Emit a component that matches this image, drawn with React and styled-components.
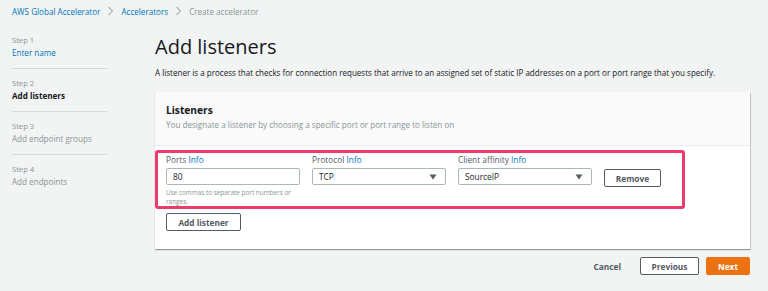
import React from "react"
import styled, { createGlobalStyle } from "styled-components"

const GlobalStyle = createGlobalStyle`
  html, body {
    margin: 0;
    padding: 0;
    background: #f2f3f3;
    font-family: "Open Sans", "Noto Sans", "Liberation Sans", sans-serif;
    color: #16191f;
  }
`

const Page = styled.div`
  width: 768px;
  height: 291px;
  overflow: hidden;
  background: #f2f3f3;
`

const Breadcrumbs = styled.nav`
  display: flex;
  align-items: center;
  gap: 7px;
  height: 22px;
  padding: 0 12px;
  font-size: 8.1px;

  > .crumb {
    color: #0073bb;
    font-weight: 500;
  }

  > .current {
    color: #879596;
  }
`

const Chevron = () => (
  <svg width="7" height="10" viewBox="0 0 7 10">
    <path d="M1.5 1 L5.5 5 L1.5 9" fill="none" stroke="#aab7b8" strokeWidth="1.1" />
  </svg>
)

const Layout = styled.div`
  display: flex;
  padding-top: 4px;
`

const Steps = styled.ol`
  list-style: none;
  margin: 0;
  padding: 0 0 0 12px;
  width: 95px;
  flex: none;
`

const Step = styled.li`
  padding: 9px 0;
  border-bottom: ${(p) => (p.$last ? "none" : "1px solid #d5dbdb")};

  > .step-num {
    font-size: 7.6px;
    color: #879596;
    line-height: 11px;
  }

  > .step-title {
    font-size: 8.1px;
    line-height: 13px;
    color: ${(p) => (p.$state === "done" ? "#0073bb" : p.$state === "active" ? "#16191f" : "#879596")};
    font-weight: ${(p) => (p.$state === "active" ? 700 : 400)};
    white-space: nowrap;
  }
`

const Main = styled.main`
  margin-left: 48px;
  width: 595px;
`

const Title = styled.h1`
  margin: 8px 0 0;
  font-size: 20px;
  font-weight: 400;
  line-height: 26px;
`

const Lead = styled.p`
  margin: 7px 0 0;
  font-size: 8.05px;
  line-height: 12px;
  white-space: nowrap;
`

const Panel = styled.section`
  margin-top: 13px;
  background: #fff;
  box-shadow: 0 1px 1px rgba(0, 28, 36, 0.3), 1px 1px 1px rgba(0, 28, 36, 0.15);

  > header {
    background: #fafafa;
    border-bottom: 1px solid #eaeded;
    padding: 10px 11px 12px;
    height: 31px;

    > h2 {
      margin: 0;
      font-size: 10.2px;
      font-weight: 700;
      line-height: 16px;
    }

    > p {
      margin: 0;
      font-size: 8.1px;
      line-height: 13px;
      color: #879596;
    }
  }
`

const PanelBody = styled.div`
  padding: 4px 0 18px;
`

const Highlight = styled.div`
  display: flex;
  align-items: flex-start;
  gap: 12px;
  width: 508px;
  height: 51px;
  padding: 1px 8px 1px 8px;
  border: 3px solid #ec3a6b;
  border-radius: 3px;
`

const Field = styled.div`
  width: 134px;

  > label {
    display: block;
    font-size: 8.3px;
    line-height: 12px;
    color: #545b64;

    > a {
      color: #0073bb;
      text-decoration: none;
    }
  }

  > small {
    display: block;
    margin-top: 4px;
    font-size: 6.4px;
    line-height: 8.5px;
    color: #879596;
  }
`

const Input = styled.div`
  display: flex;
  align-items: center;
  justify-content: space-between;
  height: 17px;
  margin-top: 2px;
  padding: 0 8px 0 6px;
  border: 1px solid #aab7b8;
  border-radius: 2px;
  background: #fff;
  font-size: 8.3px;
  color: #16191f;
  box-sizing: border-box;
`

const Caret = () => (
  <svg width="8" height="6" viewBox="0 0 8 6">
    <path d="M0.5 0.5 H7.5 L4 5.5 Z" fill="#545b64" />
  </svg>
)

const Button = styled.button`
  display: block;
  height: 18px;
  padding: 0 ${(p) => p.$px || 10}px;
  border: 1px solid ${(p) => (p.$primary ? "#ec7211" : "#545b64")};
  border-radius: 2px;
  background: ${(p) => (p.$primary ? "#ec7211" : "#fff")};
  color: ${(p) => (p.$primary ? "#fff" : "#545b64")};
  font-family: inherit;
  font-size: 8.3px;
  font-weight: 700;
  cursor: pointer;
`

const RemoveButton = styled(Button)`
  margin-top: 15px;
  width: 57px;
`

const AddButton = styled(Button)`
  margin: 4px 0 0 11px;
  width: 75px;
`

const Footer = styled.div`
  display: flex;
  align-items: center;
  justify-content: flex-end;
  gap: 7px;
  margin-top: 8px;

  > .cancel {
    border: none;
    background: none;
    padding: 0;
    margin-right: 12px;
    font-family: inherit;
    font-size: 8.3px;
    font-weight: 700;
    color: #545b64;
  }
`

const steps = [
  { num: "Step 1", title: "Enter name", state: "done" },
  { num: "Step 2", title: "Add listeners", state: "active" },
  { num: "Step 3", title: "Add endpoint groups", state: "todo" },
  { num: "Step 4", title: "Add endpoints", state: "todo" },
]

const App = () => (
  <Page>
    <GlobalStyle />
    <Breadcrumbs>
      <span className="crumb">AWS Global Accelerator</span>
      <Chevron />
      <span className="crumb">Accelerators</span>
      <Chevron />
      <span className="current">Create accelerator</span>
    </Breadcrumbs>
    <Layout>
      <Steps>
        {steps.map((s, i) => (
          <Step key={s.num} $state={s.state} $last={i === steps.length - 1}>
            <div className="step-num">{s.num}</div>
            <div className="step-title">{s.title}</div>
          </Step>
        ))}
      </Steps>
      <Main>
        <Title>Add listeners</Title>
        <Lead>
          A listener is a process that checks for connection requests that arrive to an assigned set of static IP
          addresses on a port or port range that you specify.
        </Lead>
        <Panel>
          <header>
            <h2>Listeners</h2>
            <p>You designate a listener by choosing a specific port or port range to listen on</p>
          </header>
          <PanelBody>
            <Highlight>
              <Field>
                <label>
                  Ports <a href="#">Info</a>
                </label>
                <Input>80</Input>
                <small>Use commas to separate port numbers or ranges.</small>
              </Field>
              <Field>
                <label>
                  Protocol <a href="#">Info</a>
                </label>
                <Input>
                  TCP
                  <Caret />
                </Input>
              </Field>
              <Field>
                <label>
                  Client affinity <a href="#">Info</a>
                </label>
                <Input>
                  SourceIP
                  <Caret />
                </Input>
              </Field>
              <RemoveButton>Remove</RemoveButton>
            </Highlight>
            <AddButton>Add listener</AddButton>
          </PanelBody>
        </Panel>
        <Footer>
          <button className="cancel">Cancel</button>
          <Button $px={0} style={{ width: 59 }}>Previous</Button>
          <Button $primary style={{ width: 44 }}>Next</Button>
        </Footer>
      </Main>
    </Layout>
  </Page>
)

export default App
